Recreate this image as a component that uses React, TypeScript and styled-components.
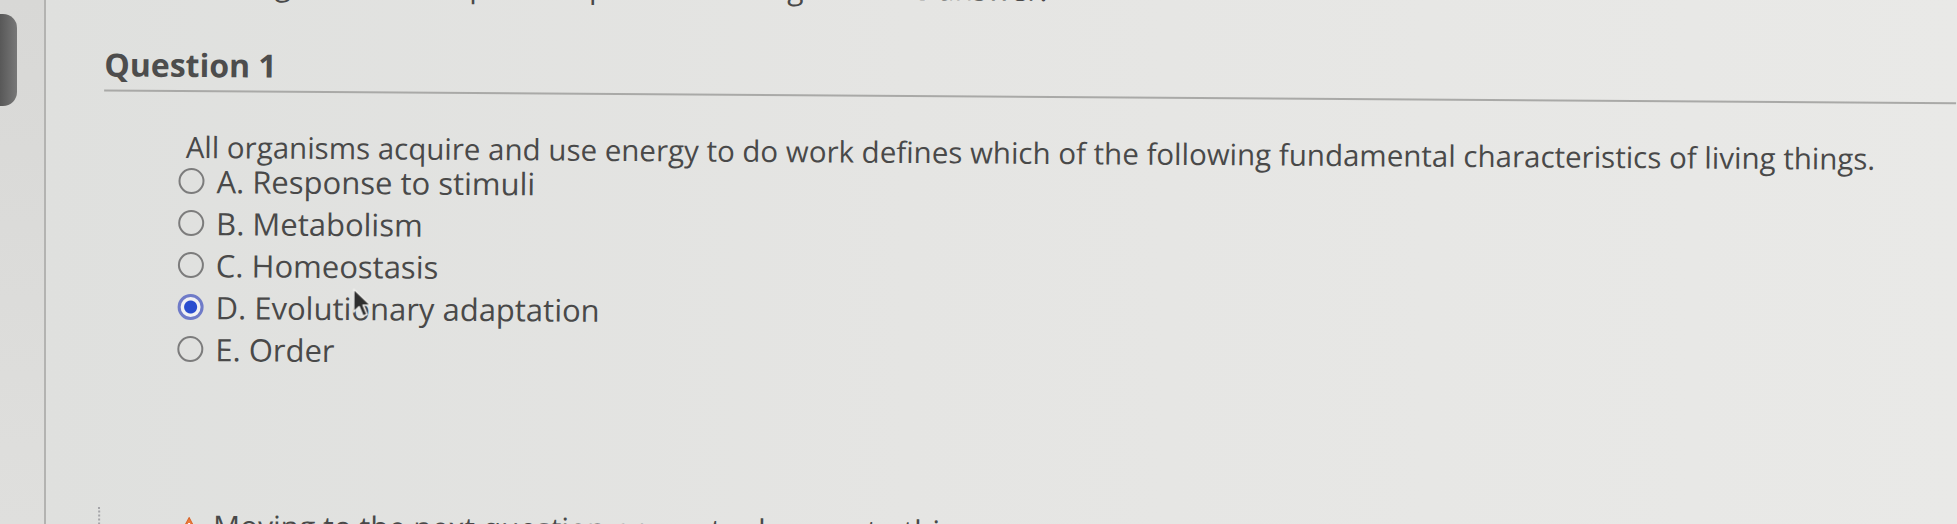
import React from "react";
import styled, { createGlobalStyle } from "styled-components";

const options = [
  { id: "A", label: "Response to stimuli" },
  { id: "B", label: "Metabolism" },
  { id: "C", label: "Homeostasis" },
  { id: "D", label: "Evolutionary adaptation" },
  { id: "E", label: "Order" },
];

const selected = "D";
const notice = "Moving to the next question prevents changes to this answer.";

const WarningIcon = () => (
  <svg width="20" height="20" viewBox="0 0 20 20">
    <path d="M10 1.5 L19 18.5 L1 18.5 Z" fill="#ea7a3c" stroke="#d9652a" strokeWidth="1" strokeLinejoin="round" />
    <rect x="9" y="7" width="2" height="6" fill="#fff" />
    <rect x="9" y="14.5" width="2" height="2" fill="#fff" />
  </svg>
);

const Pointer = () => (
  <svg width="22" height="32" viewBox="0 0 22 32">
    <path
      d="M2 2 L2 25 L7.5 19.5 L11.5 29 L15.5 27.3 L11.5 18 L19 18 Z"
      fill="#2e2e2e"
      stroke="#ededeb"
      strokeWidth="1.6"
      strokeLinejoin="round"
    />
  </svg>
);

const App: React.FC = () => {
  return (
    <>
      <GlobalStyle />
      <Page>
        <Sidebar>
          <SideTab />
        </Sidebar>
        <Main>
          <Content>
            <Notice>
              <WarningIcon />
              <NoticeText>{notice}</NoticeText>
            </Notice>

            <Header>Question 1</Header>

            <Question>
              <Prompt>
                All organisms acquire and use energy to do work defines which of
                the following fundamental characteristics of living things.
              </Prompt>
              <OptionList>
                {options.map((option) => (
                  <Option key={option.id}>
                    <Radio $checked={option.id === selected} />
                    <OptionLabel>
                      {option.id}. {option.label}
                    </OptionLabel>
                    {option.id === selected && (
                      <CursorMark>
                        <Pointer />
                      </CursorMark>
                    )}
                  </Option>
                ))}
              </OptionList>
            </Question>

            <Footer>
              <DottedMark />
              <Notice $bottom>
                <WarningIcon />
                <NoticeText>{notice}</NoticeText>
              </Notice>
            </Footer>
          </Content>
        </Main>
      </Page>
    </>
  );
};

export default App;

const GlobalStyle = createGlobalStyle`
  html, body {
    margin: 0;
    padding: 0;
  }
  body {
    font-family: "Open Sans", "Noto Sans", "Liberation Sans", sans-serif;
    background: #dcdcda;
  }
`;

const Page = styled.div`
  display: flex;
  width: 1957px;
  height: 524px;
  overflow: hidden;
`;

const Sidebar = styled.div`
  width: 44px;
  flex: none;
  padding-top: 14px;
  box-sizing: border-box;
  background: linear-gradient(180deg, #d8d8d6, #dfdfdd);
`;

const SideTab = styled.div`
  width: 17px;
  height: 92px;
  border-radius: 0 14px 14px 0;
  background: linear-gradient(90deg, #585858, #787878);
`;

const Main = styled.div`
  flex: 1;
  border-left: 2px solid #b3b3b1;
  background: linear-gradient(90deg, #dfe0de 0%, #e5e5e3 45%, #e9e9e7 100%);
  overflow: hidden;
`;

const Content = styled.div`
  transform: rotate(0.4deg);
  transform-origin: 0 0;
  color: #494949;
`;

const Notice = styled.div<{ $bottom?: boolean }>`
  display: flex;
  align-items: center;
  gap: 14px;
  margin-top: ${({ $bottom }) => ($bottom ? "0" : "-35px")};
  padding-left: ${({ $bottom }) => ($bottom ? "0" : "109px")};
  height: 36px;
`;

const NoticeText = styled.span`
  font-size: 30px;
  line-height: 36px;
  white-space: nowrap;
`;

const Header = styled.div`
  margin: 44px 0 0 59px;
  padding-bottom: 6px;
  border-bottom: 2px solid #a9a9a7;
  font-size: 32px;
  line-height: 38px;
  font-weight: 700;
  color: #4d4d4d;
`;

const Question = styled.div`
  margin-top: 37px;
  padding-left: 129px;
`;

const Prompt = styled.div`
  padding-left: 12px;
  margin-bottom: -5px;
  font-size: 29.5px;
  line-height: 36px;
  white-space: nowrap;
`;

const OptionList = styled.div`
  display: flex;
  flex-direction: column;
  padding-left: 5px;
`;

const Option = styled.div`
  position: relative;
  display: flex;
  align-items: center;
  gap: 12px;
  height: 42px;
`;

const Radio = styled.span<{ $checked: boolean }>`
  flex: none;
  width: 26px;
  height: 26px;
  box-sizing: border-box;
  border-radius: 50%;
  border: ${({ $checked }) =>
    $checked ? "3px solid #6f7bc8" : "2px solid #7c7c7c"};
  background: ${({ $checked }) =>
    $checked
      ? "radial-gradient(circle, #2a4dcf 0 6px, #f1f1f4 7px)"
      : "transparent"};
`;

const OptionLabel = styled.span`
  font-size: 31px;
  line-height: 42px;
  white-space: nowrap;
`;

const CursorMark = styled.div`
  position: absolute;
  left: 174px;
  top: 0;
  filter: blur(0.5px);
`;

const Footer = styled.div`
  display: flex;
  align-items: flex-start;
  margin-top: 138px;
  padding-left: 56px;
  gap: 79px;
`;

const DottedMark = styled.div`
  width: 0;
  height: 28px;
  border-left: 2px dotted #a4a4a8;
`;
